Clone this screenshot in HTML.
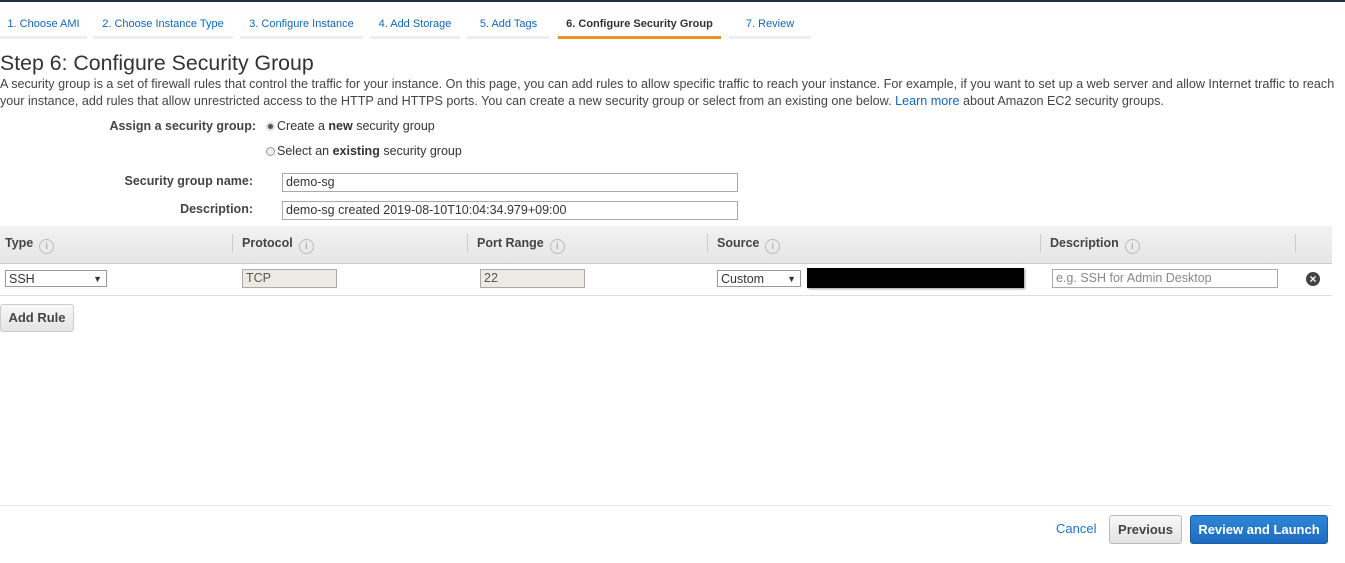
<!DOCTYPE html>
<html><head><style>
body{margin:0;width:1345px;height:563px;background:#fff;font-family:"Liberation Sans",Arial,sans-serif;font-size:12.5px;color:#444;position:relative;overflow:hidden}
.a{position:absolute}
.tab{position:absolute;top:12px;height:24px;border-bottom:3px solid #eee;color:#1166bb;font-size:11px;line-height:24px;text-align:center}
.tab.act{border-bottom-color:#f0901e;color:#333;font-weight:bold}
.info{display:inline-block;width:13px;height:13px;border:1px solid #bbb;border-radius:50%;font-size:10px;line-height:13px;text-align:center;color:#999;margin-left:6px;vertical-align:-2px;font-weight:normal}
.inp{position:absolute;height:17px;border:1px solid #aaa;font-size:12.5px;line-height:17px;padding-left:3px;box-sizing:border-box;color:#333}
.btn{position:absolute;border-radius:3px;font-weight:bold;font-size:13px;text-align:center;box-sizing:border-box}
.lbl{position:absolute;font-weight:bold;color:#444;text-align:right}
.radio{display:inline-block;width:9px;height:9px;border:1px solid #999;border-radius:50%;background:#eee;vertical-align:-1px;box-sizing:border-box;margin-right:2px}
</style></head><body>
<div class="a" style="left:0;top:0;width:1345px;height:2px;background:#232f3e"></div>
<div class="tab" style="left:0;width:87px">1. Choose AMI</div>
<div class="tab" style="left:93px;width:140px">2. Choose Instance Type</div>
<div class="tab" style="left:240px;width:123px">3. Configure Instance</div>
<div class="tab" style="left:370px;width:90px">4. Add Storage</div>
<div class="tab" style="left:467px;width:83px">5. Add Tags</div>
<div class="tab act" style="left:558px;width:163px">6. Configure Security Group</div>
<div class="tab" style="left:729px;width:82px">7. Review</div>
<div class="a" style="left:0;top:51px;font-size:21.3px;color:#333">Step 6: Configure Security Group</div>
<div class="a" style="left:0;top:76px;width:1342px;line-height:17px;color:#444;font-size:12.6px">A security group is a set of firewall rules that control the traffic for your instance. On this page, you can add rules to allow specific traffic to reach your instance. For example, if you want to set up a web server and allow Internet traffic to reach your instance, add rules that allow unrestricted access to the HTTP and HTTPS ports. You can create a new security group or select from an existing one below. <span style="color:#1166bb">Learn more</span> about Amazon EC2 security groups.</div>
<div class="lbl" style="left:60px;width:196px;top:119px">Assign a security group:</div>
<div class="a" style="left:266px;top:119px;color:#333"><span class="radio" style="background:#555;border:2px solid #ddd"></span>Create a <b>new</b> security group</div>
<div class="a" style="left:266px;top:144px;color:#333"><span class="radio"></span>Select an <b>existing</b> security group</div>
<div class="lbl" style="left:60px;width:193px;top:174px">Security group name:</div>
<div class="inp" style="left:282px;top:173px;width:456px;height:19px">demo-sg</div>
<div class="lbl" style="left:60px;width:193px;top:202px">Description:</div>
<div class="inp" style="left:282px;top:201px;width:456px;height:19px">demo-sg created 2019-08-10T10:04:34.979+09:00</div>
<div class="a" style="left:0;top:226px;width:1332px;height:37px;background:linear-gradient(#f2f2f2,#e6e6e6);border-bottom:1px solid #ccc"></div>
<div class="a" style="left:5px;top:236px;font-weight:bold;color:#444">Type<span class="info">i</span></div>
<div class="a" style="left:232px;top:234px;width:1px;height:18px;background:#ccc"></div>
<div class="a" style="left:242px;top:236px;font-weight:bold;color:#444">Protocol<span class="info">i</span></div>
<div class="a" style="left:467px;top:234px;width:1px;height:18px;background:#ccc"></div>
<div class="a" style="left:477px;top:236px;font-weight:bold;color:#444">Port Range<span class="info">i</span></div>
<div class="a" style="left:707px;top:234px;width:1px;height:18px;background:#ccc"></div>
<div class="a" style="left:717px;top:236px;font-weight:bold;color:#444">Source<span class="info">i</span></div>
<div class="a" style="left:1040px;top:234px;width:1px;height:18px;background:#ccc"></div>
<div class="a" style="left:1050px;top:236px;font-weight:bold;color:#444">Description<span class="info">i</span></div>
<div class="a" style="left:1295px;top:234px;width:1px;height:18px;background:#ccc"></div>
<div class="a" style="left:0;top:295px;width:1332px;height:1px;background:#ddd"></div>
<div class="inp" style="left:5px;top:270px;width:102px;border-color:#999">SSH<span style="position:absolute;right:4px;font-size:9px">▼</span></div>
<div class="inp" style="left:242px;top:269px;width:95px;height:19px;background:#ebebe4;color:#555">TCP</div>
<div class="inp" style="left:480px;top:269px;width:105px;height:19px;background:#ebebe4;color:#555">22</div>
<div class="inp" style="left:717px;top:270px;width:84px;border-color:#999">Custom<span style="position:absolute;right:4px;font-size:9px">▼</span></div>
<div class="a" style="left:807px;top:268px;width:217px;height:20px;background:#000;box-shadow:1px 1px 2px #999"></div>
<div class="inp" style="left:1052px;top:269px;width:226px;height:19px;color:#888">e.g. SSH for Admin Desktop</div>
<div class="a" style="left:1306px;top:272px;width:14px;height:14px;border-radius:50%;background:#444;color:#fff;font-size:12px;line-height:14px;text-align:center;font-weight:bold">×</div>
<div class="btn" style="left:0;top:304px;width:74px;height:28px;border:1px solid #ccc;background:linear-gradient(#f8f8f8,#e4e4e4);line-height:26px;color:#444">Add Rule</div>
<div class="a" style="left:0;top:505px;width:1332px;height:1px;background:#e8e8e8"></div>
<div class="a" style="left:1056px;top:521px;color:#1d72c6;font-size:13px">Cancel</div>
<div class="btn" style="left:1109px;top:515px;width:73px;height:29px;border:1px solid #bbb;background:linear-gradient(#f8f8f8,#e3e3e3);line-height:27px;color:#444">Previous</div>
<div class="btn" style="left:1190px;top:515px;width:138px;height:29px;border:1px solid #1a5ea8;background:linear-gradient(#2f86d6,#1e6cc0);line-height:27px;color:#fff">Review and Launch</div>
</body></html>
